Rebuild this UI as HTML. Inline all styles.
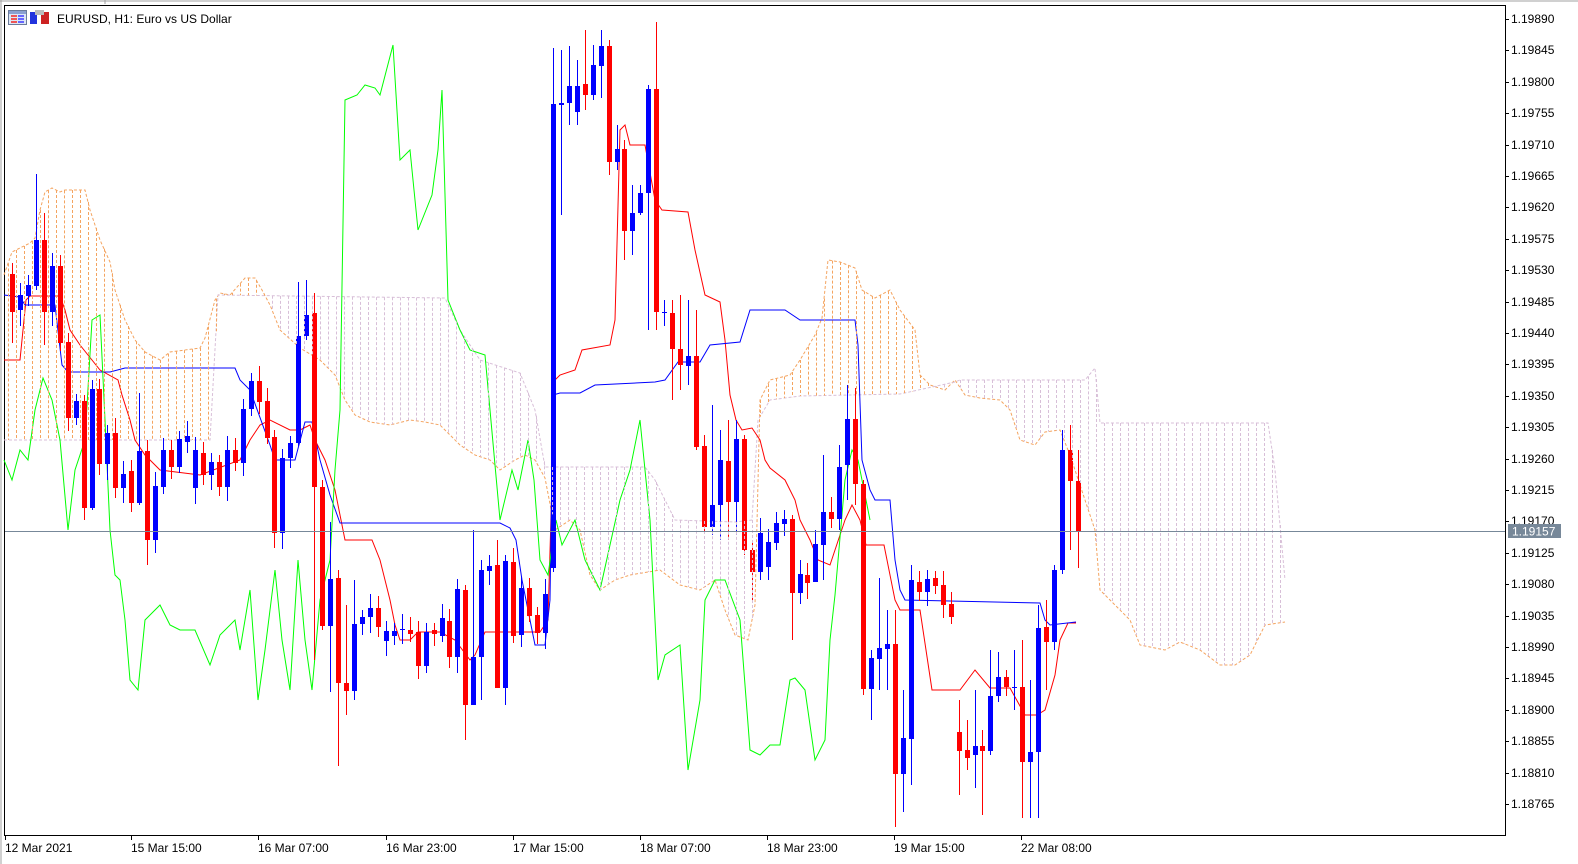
<!DOCTYPE html>
<html><head><meta charset="utf-8">
<style>
html,body{margin:0;padding:0;background:#fff;width:1578px;height:864px;overflow:hidden}
svg{display:block}
text{font-family:"Liberation Sans",sans-serif;font-size:12px;fill:#000}
</style></head>
<body>
<svg id="c" width="1578" height="864" xmlns="http://www.w3.org/2000/svg">
<rect x="0" y="0" width="1578" height="864" fill="#fff"/>
<line x1="0" y1="1" x2="1578" y2="1" stroke="#a0a0a0"/>
<line x1="1" y1="0" x2="1" y2="864" stroke="#a0a0a0"/>
<line x1="105" y1="0" x2="105" y2="4" stroke="#a0a0a0"/>
<rect x="4.5" y="5.5" width="1501" height="830" fill="none" stroke="#000"/>
<g id="cloud"></g>
<g id="lines"></g>
<g id="candles"></g>
<g id="hatch"></g>
<line x1="5" y1="531.5" x2="1505" y2="531.5" stroke="#778899"/>
<g id="axis"></g>
<rect x="1508" y="524" width="53" height="14" fill="#778899"/>
<text x="1512" y="535.5" style="fill:#fff">1.19157</text>
<!-- header icons -->
<rect x="8.5" y="10.5" width="18" height="14" fill="#dde6f5" stroke="#6b7b9b"/>
<rect x="9" y="11" width="17" height="3" fill="#8aa0d0"/>
<rect x="11" y="15" width="6" height="2" fill="#e55"/><rect x="18" y="15" width="6" height="2" fill="#66f"/>
<rect x="11" y="18" width="6" height="2" fill="#e55"/><rect x="18" y="18" width="6" height="2" fill="#66f"/>
<rect x="11" y="21" width="6" height="2" fill="#e55"/><rect x="18" y="21" width="6" height="2" fill="#66f"/>
<rect x="30" y="12" width="7" height="12" fill="#2233dd"/>
<rect x="41" y="12" width="8" height="12" fill="#cc2222"/>
<rect x="35" y="10" width="9" height="5" fill="#bbb"/>
<text x="57" y="23">EURUSD, H1:  Euro vs US Dollar</text>
</svg>
<script>
var NS="http://www.w3.org/2000/svg";
function el(p,t,a){var e=document.createElementNS(NS,t);for(var k in a)e.setAttribute(k,a[k]);p.appendChild(e);return e;}
var C=document.getElementById('candles'),L=document.getElementById('lines'),H=document.getElementById('hatch'),AX=document.getElementById('axis');
var bars=[[221,291],[274,312],[310,295],[296,285],[286,240],[240,312],[312,266],[266,343],[342,418],[418,401],[401,508],[508,389],[389,464],[464,433],[433,488],[488,474],[471,503],[503,451],[451,540],[540,486],[487,450],[450,467],[467,439],[442,436],[488,450],[453,475],[475,462],[462,487],[487,450],[450,463],[463,409],[409,381],[381,402],[401,438],[437,533],[533,458],[458,443],[443,336],[336,315],[313,487],[487,626],[626,579],[578,683],[683,691],[691,624],[624,617],[617,608],[608,627],[641,631],[636,631],[630,629],[630,634],[632,666],[666,632],[630,634],[636,618],[621,657],[657,589],[590,705],[705,657],[657,570],[571,566],[565,688],[688,561],[562,636],[635,588],[588,616],[615,633],[633,594],[568,104],[105,103],[103,86],[112,86],[84,95],[95,65],[66,46],[46,162],[162,149],[149,231],[231,213],[213,193],[193,89],[89,312],[312,312],[313,349],[349,365],[366,356],[356,447],[446,527],[527,505],[505,460],[461,502],[502,439],[439,550],[550,572],[572,533],[567,542],[543,523],[524,519],[519,593],[593,574],[575,583],[582,544],[545,512],[512,519],[519,467],[465,419],[419,484],[484,689],[689,658],[659,648],[649,644],[644,774],[774,738],[739,580],[582,592],[592,579],[578,586],[585,605],[604,617],[732,751],[750,758],[755,746],[746,751],[751,696],[696,677],[677,687],[687,687],[687,762],[762,752],[752,628],[627,642],[642,570],[570,450],[450,481],[481,531]];
var wk={0:[215,300],1:[263,343],4:[174,290],5:[213,345],10:[395,520],11:[380,510],17:[393,505],18:[440,565],34:[430,548],37:[282,446],38:[280,340],39:[293,660],40:[480,630],41:[522,692],42:[570,766],43:[605,715],44:[580,700],58:[585,740],59:[530,705],60:[560,700],62:[540,680],63:[555,705],69:[48,572],70:[50,215],71:[46,125],72:[60,125],73:[30,110],74:[45,100],75:[30,98],76:[40,175],77:[125,170],78:[140,260],79:[185,255],80:[185,215],81:[85,330],82:[22,330],84:[300,400],85:[295,390],86:[300,385],87:[310,450],89:[405,535],90:[430,540],91:[420,540],92:[420,535],93:[435,555],94:[540,600],99:[515,640],102:[530,578],103:[455,580],105:[445,530],106:[385,500],107:[388,505],108:[480,695],109:[650,720],110:[578,690],111:[610,690],112:[610,827],113:[690,812],114:[565,785],120:[700,795],121:[720,770],122:[690,788],123:[730,815],124:[650,755],125:[652,702],127:[650,710],128:[640,818],129:[680,818],130:[605,818],131:[600,690],132:[565,650],133:[430,574],134:[425,550],135:[450,568]};
bars.forEach(function(b,i){
 var x=Math.round(4+7.955*i),o=b[0],c=b[1];
 var up=c<o||(c==o&&i%2==0);var col=(c<o)?'#0000ff':(c>o?'#ff0000':'#0000ff');
 var top=Math.min(o,c),bot=Math.max(o,c);
 var w=wk[i]||[top-7-(i*7)%9,bot+6+(i*5)%11];
 if(x<5)return;
 el(C,'line',{x1:x+0.5,y1:w[0],x2:x+0.5,y2:w[1],stroke:col,'stroke-width':1});
 el(C,'rect',{x:x-2,y:top,width:5,height:Math.max(1,bot-top),fill:col});
});
function pl(pts,col,w,dash){el(L,'polyline',{points:pts.map(function(p){return p.join(',')}).join(' '),fill:'none',stroke:col,'stroke-width':w||1,'stroke-dasharray':dash||'none'});}
var A=[[4,275],[12,252],[30,243],[35,238],[40,210],[45,192],[52,188],[60,192],[65,190],[85,190],[90,210],[100,240],[110,262],[115,290],[125,320],[135,340],[145,352],[160,360],[170,352],[200,348],[205,338],[215,300],[220,293],[230,295],[245,278],[255,278],[262,290],[270,305],[280,330],[300,348],[320,360],[335,375],[345,400],[355,415],[370,422],[390,425],[410,420],[425,422],[440,425],[460,445],[475,455],[490,460],[500,470],[515,460],[525,455],[535,460],[545,478],[555,530],[570,520],[580,530],[590,575],[600,590],[615,580],[630,575],[660,570],[680,585],[700,590],[715,580],[725,610],[735,635],[748,640],[755,605],[760,400],[770,380],[790,375],[800,360],[815,335],[822,318],[828,260],[840,262],[855,268],[862,290],[875,298],[890,290],[900,310],[915,330],[920,375],[930,385],[945,390],[955,380],[965,395],[980,398],[1000,400],[1010,410],[1020,440],[1035,445],[1045,432],[1060,430],[1070,455],[1085,500],[1095,530],[1100,590],[1110,600],[1130,620],[1140,645],[1165,650],[1180,642],[1200,650],[1220,665],[1235,665],[1250,655],[1265,625],[1285,622]];
var B=[[4,440],[210,440],[218,295],[445,298],[460,330],[480,360],[520,373],[535,410],[545,467],[645,467],[655,480],[675,520],[735,522],[752,520],[758,420],[770,400],[800,396],[900,394],[955,382],[960,380],[1085,380],[1095,368],[1100,423],[1268,423],[1275,470],[1285,580]];
function interp(P,x){for(var i=1;i<P.length;i++){if(x<=P[i][0]){var a=P[i-1],b=P[i];return a[1]+(b[1]-a[1])*(x-a[0])/(b[0]-a[0]);}}return P[P.length-1][1];}
for(var x=8;x<=1282;x+=8){var a=interp(A,x),b=interp(B,x);var col=a<b?'#f4a460':'#d8bfd8';el(H,'line',{x1:x+0.5,y1:Math.min(a,b),x2:x+0.5,y2:Math.max(a,b),stroke:col,'stroke-dasharray':'3,2'});}
pl(A,'#f4a460',1,'3,2');pl(B,'#d8bfd8',1,'3,2');
pl([[4,360],[20,360],[26,300],[30,296],[60,296],[65,310],[70,330],[80,345],[100,370],[118,380],[122,395],[130,420],[135,440],[145,455],[160,470],[200,475],[240,460],[250,440],[260,425],[270,420],[290,430],[300,430],[310,425],[315,440],[325,460],[335,490],[345,540],[372,540],[380,560],[390,600],[395,625],[400,640],[410,640],[418,632],[440,632],[455,640],[470,660],[475,655],[485,632],[540,632],[548,620],[555,380],[560,375],[575,370],[582,350],[610,345],[615,320],[620,130],[625,125],[630,145],[645,145],[655,200],[662,210],[688,212],[695,250],[705,295],[720,302],[725,340],[730,395],[736,420],[742,430],[752,428],[760,440],[765,460],[770,468],[785,480],[795,500],[800,520],[810,540],[818,560],[830,565],[845,520],[852,505],[860,520],[866,545],[884,545],[895,600],[900,610],[920,610],[932,690],[960,690],[975,670],[990,688],[1010,688],[1025,715],[1037,715],[1045,710],[1055,675],[1060,640],[1068,623],[1076,623]],'#ff0000');
pl([[4,295],[20,297],[25,305],[55,305],[62,365],[68,372],[110,372],[125,368],[235,368],[240,380],[250,390],[270,445],[275,460],[295,460],[305,422],[312,422],[320,460],[330,495],[340,523],[500,523],[510,528],[516,540],[522,580],[535,645],[545,645],[550,600],[553,395],[560,393],[580,393],[595,385],[655,382],[665,380],[678,362],[700,362],[710,345],[740,342],[750,310],[785,310],[800,320],[855,320],[858,345],[862,460],[870,490],[875,500],[890,500],[895,560],[900,590],[905,600],[1040,603],[1045,620],[1050,625],[1076,622]],'#0000ff');
pl([[4,460],[12,480],[20,450],[28,460],[35,410],[43,378],[52,400],[60,440],[68,530],[75,470],[85,440],[92,320],[100,315],[105,420],[110,530],[115,575],[120,580],[125,620],[130,680],[138,690],[145,620],[160,605],[170,625],[180,630],[195,630],[210,665],[220,635],[235,620],[240,650],[250,590],[258,700],[265,650],[275,570],[282,640],[290,690],[298,560],[305,640],[312,690],[320,600],[330,560],[335,470],[340,410],[345,100],[357,95],[365,85],[375,88],[380,95],[393,45],[400,160],[410,150],[418,230],[432,195],[438,150],[442,90],[448,300],[460,330],[470,350],[485,355],[500,520],[512,470],[518,490],[528,440],[534,480],[540,560],[548,575],[556,520],[562,545],[575,520],[585,560],[600,590],[620,500],[630,470],[640,420],[650,520],[658,680],[665,655],[680,645],[688,770],[700,700],[705,600],[715,580],[725,580],[740,620],[750,750],[760,755],[770,745],[780,745],[790,680],[795,678],[805,690],[815,760],[825,740],[830,640],[835,595],[845,480],[852,450],[858,460],[870,520]],'#00ff00');
// price axis
var prices=["1.19890","1.19845","1.19800","1.19755","1.19710","1.19665","1.19620","1.19575","1.19530","1.19485","1.19440","1.19395","1.19350","1.19305","1.19260","1.19215","1.19170","1.19125","1.19080","1.19035","1.18990","1.18945","1.18900","1.18855","1.18810","1.18765"];
prices.forEach(function(p,i){var y=Math.round(19+31.4*i);el(AX,'line',{x1:1505,y1:y+0.5,x2:1509,y2:y+0.5,stroke:'#000'});var t=el(AX,'text',{x:1511,y:y+4});t.textContent=p;});
var times=[[5,"12 Mar 2021"],[131,"15 Mar 15:00"],[258,"16 Mar 07:00"],[386,"16 Mar 23:00"],[513,"17 Mar 15:00"],[640,"18 Mar 07:00"],[767,"18 Mar 23:00"],[894,"19 Mar 15:00"],[1021,"22 Mar 08:00"]];
times.forEach(function(t){el(AX,'line',{x1:t[0]+0.5,y1:836,x2:t[0]+0.5,y2:840,stroke:'#000'});var e=el(AX,'text',{x:t[0],y:852});e.textContent=t[1];});
</script>
</body></html>
